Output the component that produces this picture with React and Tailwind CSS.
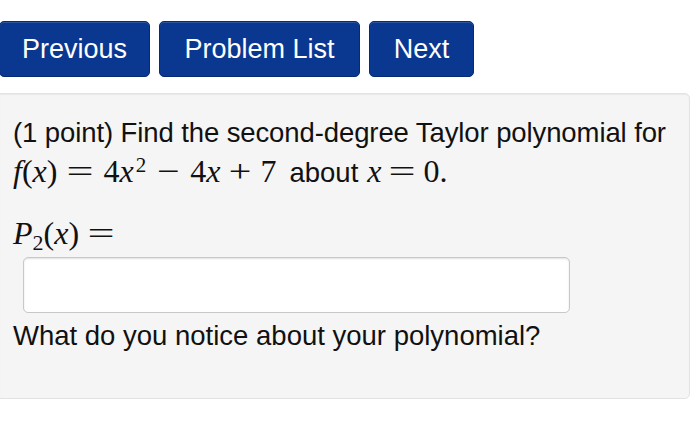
function Op({ children, m, s }) {
  return (
    <span className={m}>
      <span className={`inline-block ${s}`}>{children}</span>
    </span>
  );
}

export default function App() {
  const btn =
    "h-[56px] rounded-[5px] border border-[#062a73] bg-[#0a3890] text-white text-[27px] leading-none shadow-[inset_0_1px_0_rgba(255,255,255,0.15)]";
  const serif = { fontFamily: '"Liberation Serif", "Times New Roman", serif' };

  return (
    <div
      className="w-[700px] h-[425px] bg-white overflow-hidden text-[#111]"
      style={{ fontFamily: '"Liberation Sans", Arial, sans-serif' }}
    >
      <div className="flex pt-[21px] gap-[9px] -ml-[1px]">
        <button className={`${btn} w-[151px]`}>Previous</button>
        <button className={`${btn} w-[201px]`}>Problem List</button>
        <button className={`${btn} w-[105px]`}>Next</button>
      </div>

      <div className="mt-[16px] w-[691px] h-[306px] -ml-[1px] bg-[#f5f5f5] border border-[#e3e3e3] rounded-r-[5px] shadow-[inset_0_1px_1px_rgba(0,0,0,0.05)] pl-[13px] pt-[22px]">
        <p className="text-[27.5px] leading-[34px] tracking-[-0.1px]">
          (1 point) Find the second-degree Taylor polynomial for
        </p>
        <p className="text-[27.5px] leading-[38px] mt-[2px] flex items-baseline whitespace-nowrap">
          <span style={serif} className="text-[32px]">
            <i>f</i>(<i>x</i>)
            <Op m="mx-[14px]" s="scale-x-[1.5]">=</Op>4<i>x</i>
            <sup className="text-[21px] ml-[2px]">2</sup>
            <Op m="mx-[13px]" s="scale-x-[1.25]">−</Op>4<i>x</i>
            <Op m="mx-[11px]" s="scale-x-[1.25]">+</Op>7
          </span>
          <span className="ml-[13px]">about</span>
          <span style={serif} className="text-[32px] ml-[9px]">
            <i>x</i>
            <Op m="mx-[12px]" s="scale-x-[1.5]">=</Op>0.
          </span>
        </p>
        <p style={serif} className="text-[32px] leading-[38px] mt-[22px]">
          <i>P</i>
          <sub className="text-[22px]">2</sub>(<i>x</i>)
          <Op m="mx-[13px]" s="scale-x-[1.5]">=</Op>
        </p>
        <div className="mt-[5px] ml-[10px] w-[547px] h-[56px] bg-white border border-[#c8c8c8] rounded-[5px] shadow-[inset_0_1px_2px_rgba(0,0,0,0.12)]" />
        <p className="text-[27.5px] leading-[34px] mt-[6px]">
          What do you notice about your polynomial?
        </p>
      </div>
    </div>
  );
}
